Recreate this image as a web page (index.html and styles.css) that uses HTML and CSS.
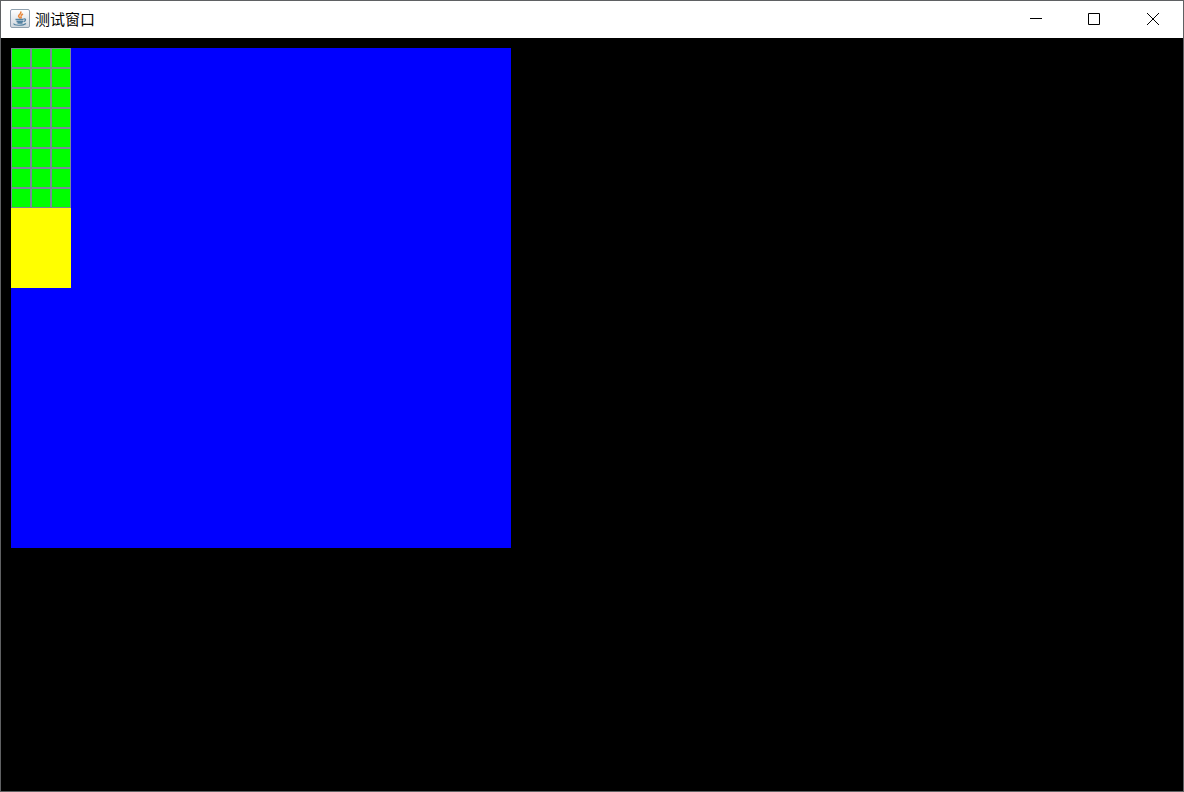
FILE: index.html
```html
<!DOCTYPE html>
<html lang="zh-CN">
<head>
  <meta charset="UTF-8">
  <meta name="viewport" content="width=device-width, initial-scale=1.0">
  <title>测试窗口</title>
  <link rel="stylesheet" href="styles.css">
</head>
<body>
  <div class="window">
    <header class="titlebar">
      <svg class="app-icon" width="20" height="20" viewBox="0 0 20 20" aria-hidden="true">
        <defs>
          <linearGradient id="tile" x1="0" y1="0" x2="0" y2="1">
            <stop offset="0" stop-color="#ffffff"/>
            <stop offset="1" stop-color="#cfd6dd"/>
          </linearGradient>
        </defs>
        <rect x="0.5" y="0.5" width="19" height="18" rx="1.5" fill="url(#tile)" stroke="#8fa0ae"/>
        <path d="M10.500 2.500c2 2.500-3.500 3.500-1.500 5.500l1.500 1.500M13 5c-2.500 1.500-2.500 2.500-1.500 4.500" fill="none" stroke="#e8883c" stroke-width="1.500"/>
        <path d="M5.500 10.500h8M6.500 12.500h6.500M7.500 14h5" fill="none" stroke="#5382a1" stroke-width="1.300"/>
        <path d="M13.500 10c3-.5 2.500 2 0 2.700M4 14.500c-1 2.200 9 2.500 12 0" fill="none" stroke="#5382a1" stroke-width="1.200"/>
      </svg>
      <h1 class="title">测试窗口</h1>
      <div class="controls">
        <button type="button" class="control" aria-label="最小化">
          <svg width="14" height="14" viewBox="0 0 14 14"><path d="M1 6.500h12"/></svg>
        </button>
        <button type="button" class="control" aria-label="最大化">
          <svg width="14" height="14" viewBox="0 0 14 14"><path d="M1.500 1.500h11v11h-11z"/></svg>
        </button>
        <button type="button" class="control" aria-label="关闭">
          <svg width="14" height="14" viewBox="0 0 14 14"><path d="M2 1l12 12M14 1L2 13"/></svg>
        </button>
      </div>
    </header>

    <main class="content">
      <div class="panel">
        <div class="column">
          <div class="grid">
            <span class="cell"></span><span class="cell"></span><span class="cell"></span>
            <span class="cell"></span><span class="cell"></span><span class="cell"></span>
            <span class="cell"></span><span class="cell"></span><span class="cell"></span>
            <span class="cell"></span><span class="cell"></span><span class="cell"></span>
            <span class="cell"></span><span class="cell"></span><span class="cell"></span>
            <span class="cell"></span><span class="cell"></span><span class="cell"></span>
            <span class="cell"></span><span class="cell"></span><span class="cell"></span>
            <span class="cell"></span><span class="cell"></span><span class="cell"></span>
          </div>
        </div>
      </div>
    </main>
  </div>
</body>
</html>
```

FILE: styles.css
```css
body {
  margin: 0;
  font-family: "Noto Sans CJK SC", sans-serif;
}
.window {
  box-sizing: border-box;
  min-height: 100vh;
  display: flex;
  flex-direction: column;
  border: 1px solid #5f6163;
  background: #000;
}
.titlebar {
  display: flex;
  align-items: center;
  height: 36px;
  padding: 0 2px 1px 9px;
  background: #fff;
}
.title {
  margin: 0 0 0 5px;
  font-size: 15px;
  font-weight: 400;
  line-height: 20px;
  color: #000;
}
.controls {
  display: flex;
  align-self: stretch;
  margin-left: auto;
}
.control {
  display: flex;
  align-items: center;
  justify-content: center;
  width: 58px;
  padding: 0;
  border: 0;
  background: none;
}
.control:hover {
  background: #e5e5e5;
}
.control svg {
  fill: none;
  stroke: #000;
  overflow: visible;
}
.content {
  flex: 1;
  padding: 10px;
}
.panel {
  width: 500px;
  height: 500px;
  background: #00f;
}
/* green cells fill the top, yellow is the free space under them */
.column {
  width: 60px;
  height: 240px;
  background: #ff0;
}
.grid {
  display: grid;
  grid-template-columns: repeat(3, 20px);
  grid-auto-rows: 20px;
}
.cell {
  border: 1px solid #7a8a99;
  background: #0f0;
}
```
